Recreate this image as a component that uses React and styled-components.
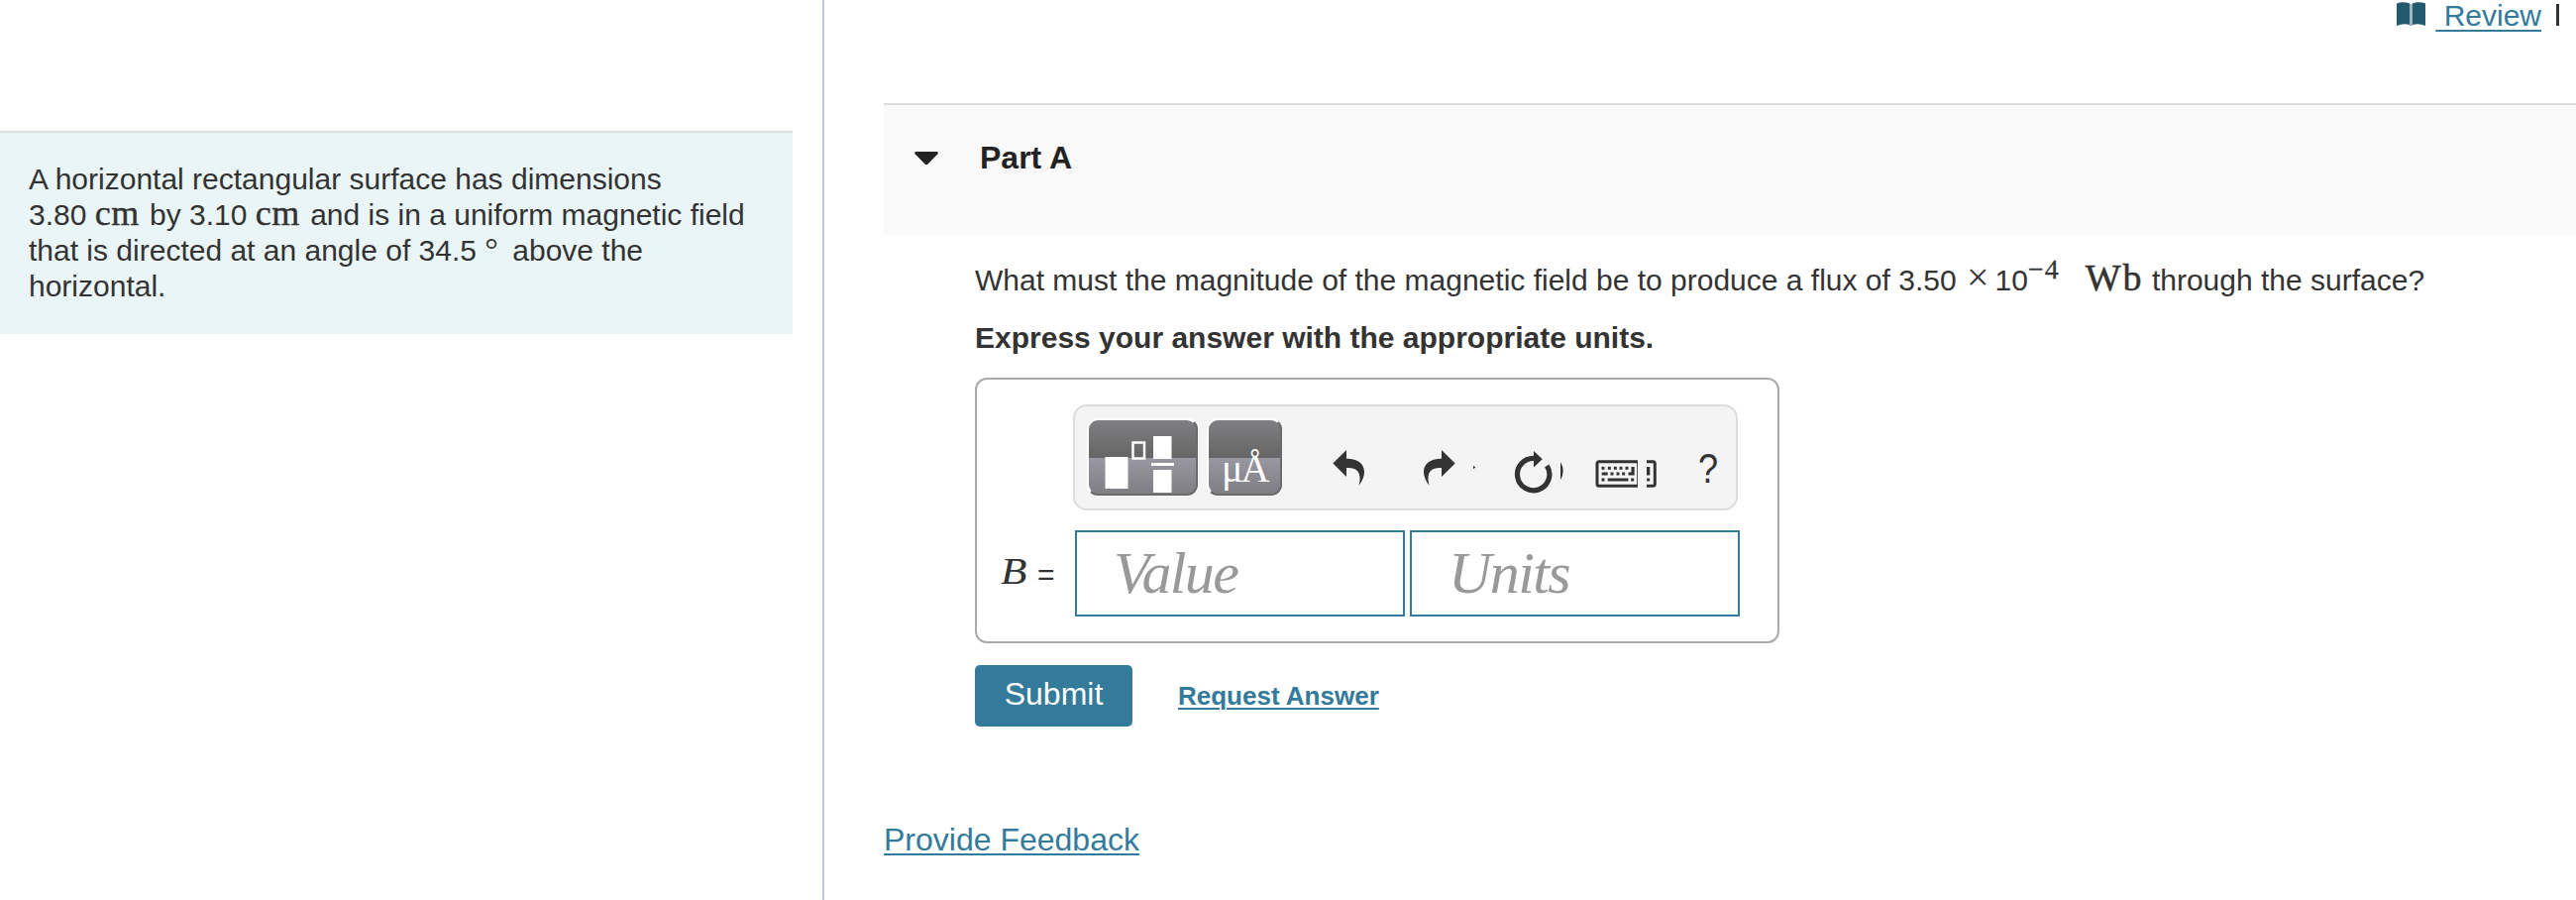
import React from "react";
import styled, { createGlobalStyle } from "styled-components";

const ink = "#333333";
const link = "#337a9b";

const GlobalStyle = createGlobalStyle`
  * { box-sizing: border-box; }
  body {
    margin: 0;
    background: #fff;
    color: ${ink};
    font: 30px/36px "Liberation Sans", Arial, sans-serif;
    overflow: hidden;
  }
  p, h2 { margin: 0; }
`;

const Page = styled.div`
  display: flex;
  width: 2600px;
  height: 908px;
`;
const Sidebar = styled.aside`
  width: 832px;
  padding-top: 132px;
  border-right: 2px solid #bcc8dc;
`;
const Problem = styled.div`
  width: 800px;
  height: 205px;
  padding: 29px 0 0 29px;
  border-top: 2px solid #dddddd;
  background: #eaf5f7;
  white-space: nowrap;
`;
const Main = styled.main`
  flex: 1;
  padding-left: 60px;
  min-width: 0;
`;
const TopBar = styled.nav`
  display: flex;
  justify-content: flex-end;
  height: 104px;
  padding-right: 17px;
  line-height: 32px;
`;
const BookIcon = styled.svg`
  width: 30px;
  height: 26px;
  margin: 2px 9px 0 0;
`;
const Link = styled.a`
  color: ${link};
  white-space: pre;
  text-decoration: underline;
  text-decoration-thickness: 2px;
  text-underline-offset: ${(p) => p.$offset || 3}px;
  text-decoration-skip-ink: ${(p) => p.$skip || "none"};
  font-size: ${(p) => p.$size || 30}px;
  font-weight: ${(p) => p.$weight || 400};
`;
const Separator = styled.span`
  width: 3px;
  height: 22px;
  margin: 4px 0 0 15px;
  background: ${ink};
`;
const PartHeader = styled.header`
  display: flex;
  height: 133px;
  padding: 35px 0 0 31px;
  border-top: 2px solid #dddddd;
  background: #f9f9f9;
  color: #222;
`;
const Caret = styled.svg`
  width: 24px;
  height: 14px;
  margin: 12px 42px 0 0;
`;
const PartTitle = styled.h2`
  font-size: 32px;
  line-height: 36px;
  font-weight: 700;
`;
const Body = styled.section`
  padding: 28px 0 0 92px;
`;
const Question = styled.p`
  height: 36px;
  white-space: nowrap;
`;
const Instruction = styled.p`
  margin-top: 22px;
  font-weight: 700;
`;
const MathText = styled.span`
  font-family: "Liberation Serif", serif;
  font-size: ${(p) => p.$size || 36}px;
  line-height: 0;
  letter-spacing: ${(p) => p.$track || 0}px;
  margin: 0 ${(p) => p.$right || 0}px 0 ${(p) => p.$left || 0}px;
  vertical-align: ${(p) => p.$rise || 0}px;
  -webkit-text-stroke: ${(p) => p.$stroke || 0}px ${ink};
`;
const AnswerBox = styled.div`
  width: 812px;
  height: 268px;
  margin-top: 22px;
  padding: 25px 0 0 24px;
  border: 2px solid #aaaaaa;
  border-radius: 12px;
`;
const Toolbar = styled.div`
  display: flex;
  width: 671px;
  height: 107px;
  margin-left: 73px;
  padding: 12px 0 0 12px;
  border: 2px solid #dddddd;
  border-radius: 14px;
  background: #f4f4f4;
`;
const ToolButton = styled.div`
  flex: none;
  width: ${(p) => p.$w}px;
  height: 78px;
  margin-right: ${(p) => p.$gap}px;
  border: 2px solid;
  border-color: #fff #6b6b6d #6b6b6d #fff;
  border-radius: 11px;
  background: linear-gradient(#818185, #656565 51%, #9997a1 51%, #7e7d82);
  background-origin: border-box;
`;
const ButtonArt = styled.svg`
  display: block;
  width: 108px;
  height: 74px;
`;
const Symbols = styled.div`
  padding: 28px 0 0 13px;
  color: #fff;
  font: 40px/42px "Liberation Serif", serif;
  letter-spacing: -2px;
  white-space: nowrap;
`;
const ToolIcon = styled.svg`
  flex: none;
  width: ${(p) => p.$w}px;
  height: 78px;
  margin-left: ${(p) => p.$gap}px;
  fill: ${ink};
`;
const Help = styled.span`
  margin: 27px 0 0 42px;
  font-size: 42px;
  line-height: 48px;
  transform: scaleX(0.86);
  transform-origin: left;
`;
const InputRow = styled.div`
  display: flex;
  height: 87px;
  margin-top: 20px;
`;
const Label = styled.div`
  display: flex;
  align-items: baseline;
  width: 75px;
  padding-top: 24px;
`;
const Variable = styled.span`
  width: 37px;
  font: italic 38px/36px "Liberation Serif", serif;
  transform: translateY(-1px) scaleX(1.14);
  transform-origin: left;
`;
const Field = styled.div`
  width: 333px;
  height: 87px;
  margin-right: 5px;
  padding: 7px 0 0 37px;
  border: 2px solid ${link};
  color: #999;
  font: italic 60px/68px "Liberation Serif", serif;
  letter-spacing: -1.6px;
`;
const Actions = styled.div`
  display: flex;
  margin-top: 22px;
`;
const Submit = styled.div`
  width: 159px;
  height: 62px;
  margin-right: 46px;
  padding-top: 11px;
  border-radius: 5px;
  background: ${link};
  color: #fff;
  font-size: 32px;
  text-align: center;
`;
const RequestSlot = styled.div`
  padding-top: 12px;
`;
const Feedback = styled.div`
  margin-top: 96px;
`;

const KEY_DOTS = [
  [1618, 472.3], [1624.3, 472.3], [1630.3, 472.3], [1636, 472.3], [1642, 472.3],
  [1627, 478], [1633, 478], [1638.7, 478],
  [1618, 484], [1647.7, 484], [1663.7, 484],
];

export default function App() {
  return (
    <Page>
      <GlobalStyle />
      <Sidebar>
        <Problem>
          A horizontal rectangular surface has dimensions
          <br />
          3.80 <MathText $track={0.5} $right={2} $stroke={0.4}>cm</MathText> by 3.10{" "}
          <MathText $track={0.5} $right={2} $stroke={0.4}>cm</MathText> and is in a uniform magnetic field
          <br />
          that is directed at an angle of 34.5 <MathText $size={34} $right={6}>°</MathText>
          {" "}above the
          <br />
          horizontal.
        </Problem>
      </Sidebar>
      <Main>
        <TopBar>
          <BookIcon viewBox="0 0 30 26" fill="#23596d">
            <path d="M0 1.5Q6.5-1 13 1.5V23Q6.5 21 0 24Z" />
            <path d="M16 1.5Q22.5-1 29 1.5V24Q22.5 21 16 23Z" />
            <path d="M13 2H16V24H13Z" fill="#9db5be" />
          </BookIcon>
          <Link $offset={4}> Review</Link>
          <Separator />
        </TopBar>
        <PartHeader>
          <Caret viewBox="0 0 24 14" fill="#222">
            <path d="M1.5 0H22.5Q24.5.5 23.5 2.2L13.5 12.5Q12 14 10.5 12.5L.5 2.2Q-.5.5 1.5 0Z" />
          </Caret>
          <PartTitle>Part A</PartTitle>
        </PartHeader>
        <Body>
          <Question>
            What must the magnitude of the magnetic field be to produce a flux of 3.50{" "}
            <MathText $size={40} $left={2} $right={6}>×</MathText>
            10<MathText $size={28} $rise={12} $track={1} $stroke={0.3}>−4</MathText>
            <MathText $size={38} $left={26} $track={2} $stroke={0.5}>Wb</MathText> through the surface?
          </Question>
          <Instruction>Express your answer with the appropriate units.</Instruction>
          <AnswerBox>
            <Toolbar>
              <ToolButton $w={112} $gap={9}>
                <ButtonArt viewBox="1099 424 108 74" fill="#fff">
                  <path d="M1115.500 461H1138.500V493H1115.500ZM1164 440H1182.500V463H1164ZM1164 474H1182.500V497H1164ZM1162 467H1185V470H1162Z" />
                  <path d="M1143.500 446.500H1155V462.500H1143.500Z" fill="none" stroke="#fff" strokeWidth="2.500" />
                </ButtonArt>
              </ToolButton>
              <ToolButton $w={76} $gap={0}>
                <Symbols>μÅ</Symbols>
              </ToolButton>
              <ToolIcon $w={34} $gap={50} viewBox="1344 422 34 78">
                <path d="M1345.300 467.500L1359 454V462.700H1361C1377 463.500 1382 476 1371.500 490C1374.500 478 1371 472 1361 472H1359V481Z" />
              </ToolIcon>
              <ToolIcon $w={54} $gap={58} viewBox="1436 422 54 78">
                <path d="M1468.700 467.500L1455 454V462.700H1453C1437 463.500 1432 476 1442.500 490C1439.500 478 1443 472 1453 472H1455V481Z" />
                <path d="M1487 469.700L1489.300 471.500L1487 473.300Z" />
              </ToolIcon>
              <ToolIcon $w={52} $gap={38} viewBox="1528 422 52 78">
                <path
                  d="M1548.500 462.400A16.200 16.200 0 1 0 1561.300 469.800"
                  fill="none"
                  stroke={ink}
                  strokeWidth="5.200"
                />
                <path d="M1548 455L1556.800 463.300L1548 471.500ZM1575 466Q1580.300 475 1575 484.300Z" />
              </ToolIcon>
              <ToolIcon $w={62} $gap={30} viewBox="1610 422 62 78">
                <path
                  d="M1653 465.700H1614Q1612 465.700 1612 467.700V488.300Q1612 490.300 1614 490.300H1653M1662 465.700H1668.300Q1670.300 465.700 1670.300 467.700V488.300Q1670.300 490.300 1668.300 490.300H1662"
                  fill="none"
                  stroke={ink}
                  strokeWidth="3"
                />
                <path d="M1652.200 466H1653V490H1652.200Z" />
                <path d="M1646.500 471H1649.700V479.500H1643.500V476.500H1646.500ZM1662 471H1665.300V479.500H1662ZM1616.700 476.600H1622.700V479.500H1616.700ZM1622.700 482.600H1643.500V485.500H1622.700Z" />
                {KEY_DOTS.map(([x, y]) => (
                  <rect key={`${x}-${y}`} x={x - 1.5} y={y - 1.5} width="3" height="3" />
                ))}
              </ToolIcon>
              <Help>?</Help>
            </Toolbar>
            <InputRow>
              <Label>
                <Variable>B</Variable>=
              </Label>
              <Field>Value</Field>
              <Field>Units</Field>
            </InputRow>
          </AnswerBox>
          <Actions>
            <Submit>Submit</Submit>
            <RequestSlot>
              <Link $size={26} $weight={700} $skip="auto">Request Answer</Link>
            </RequestSlot>
          </Actions>
        </Body>
        <Feedback>
          <Link $size={32}>Provide Feedback</Link>
        </Feedback>
      </Main>
    </Page>
  );
}
